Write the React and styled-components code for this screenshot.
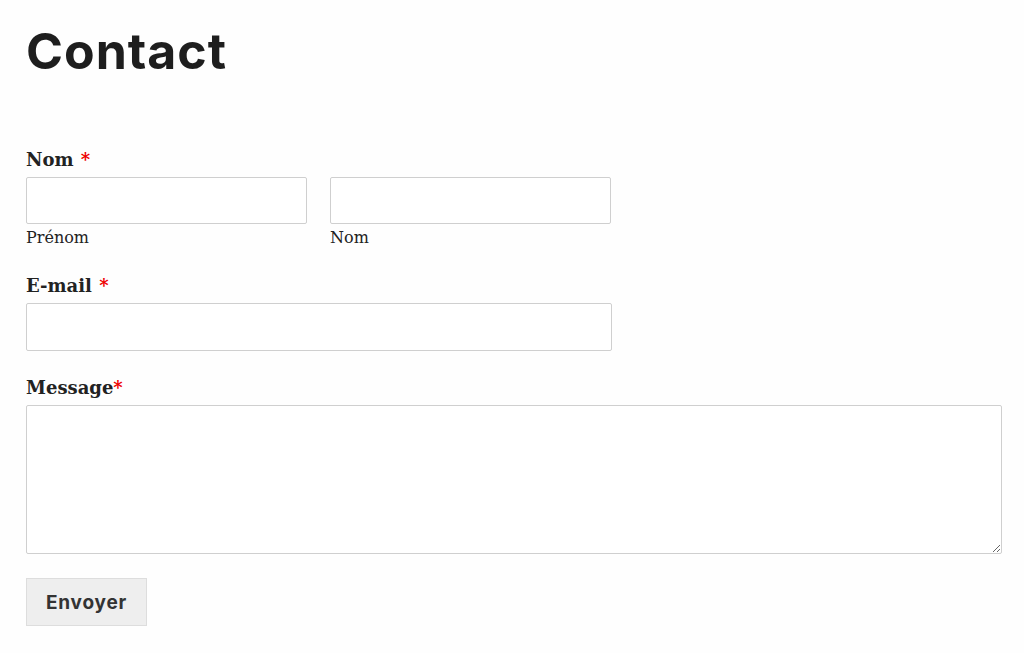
import React from 'react';
import styled, { createGlobalStyle } from 'styled-components';

const GlobalStyle = createGlobalStyle`
  body {
    margin: 0;
    background: #fefefe;
    color: #1e1e1e;
    font-family: "DejaVu Serif", serif;
  }
`;

const Page = styled.div`
  padding: 22px 22px 0 26px;
  width: 976px;
`;

const Title = styled.h1`
  margin: 0 0 67px;
  font-family: Inter, "Liberation Sans", sans-serif;
  font-weight: 700;
  font-size: 50px;
  line-height: 58px;
  letter-spacing: 1px;
  color: #1e1e1e;
`;

const Form = styled.form`
  display: flex;
  flex-direction: column;
`;

const Field = styled.div`
  display: flex;
  flex-direction: column;
  margin-bottom: ${p => p.$gap || 24}px;
`;

const Label = styled.label`
  font-family: "DejaVu Serif", serif;
  font-weight: 700;
  font-size: 18px;
  line-height: 26px;
  margin-bottom: 4px;
  color: #222;
`;

const Star = styled.span`
  color: #ee0000;
  margin-left: ${p => (p.$tight ? 0 : 1)}px;
`;

const Row = styled.div`
  display: flex;
  gap: 23px;
`;

const Part = styled.div`
  display: flex;
  flex-direction: column;
  width: 281px;
`;

const Input = styled.input`
  box-sizing: border-box;
  height: ${p => p.$h || 47}px;
  width: ${p => p.$w || 281}px;
  border: 1px solid #cfcfcf;
  border-radius: 2px;
  background: #fff;
  padding: 0 10px;
  font-size: 16px;
`;

const SubLabel = styled.span`
  font-family: "DejaVu Serif", serif;
  font-size: 16px;
  line-height: 24px;
  margin-top: 2px;
  color: #222;
`;

const TextArea = styled.textarea`
  box-sizing: border-box;
  width: 976px;
  height: 149px;
  border: 1px solid #cfcfcf;
  border-radius: 2px;
  background: #fff;
  padding: 10px;
  font-size: 16px;
  resize: vertical;
`;

const Button = styled.button`
  align-self: flex-start;
  box-sizing: border-box;
  width: 121px;
  height: 48px;
  background: #eeeeee;
  border: 1px solid #dddddd;
  border-radius: 0;
  font-family: Inter, "Liberation Sans", sans-serif;
  font-weight: 700;
  font-size: 19px;
  letter-spacing: 0.8px;
  color: #333;
  cursor: pointer;
`;

export default function App() {
  return (
    <>
      <GlobalStyle />
      <Page>
        <Title>Contact</Title>
        <Form onSubmit={e => e.preventDefault()}>
          <Field $gap={23}>
            <Label>Nom <Star>*</Star></Label>
            <Row>
              <Part>
                <Input />
                <SubLabel>Prénom</SubLabel>
              </Part>
              <Part>
                <Input />
                <SubLabel>Nom</SubLabel>
              </Part>
            </Row>
          </Field>
          <Field $gap={24}>
            <Label>E-mail <Star>*</Star></Label>
            <Input $w={586} $h={48} />
          </Field>
          <Field $gap={24}>
            <Label>Message<Star $tight>*</Star></Label>
            <TextArea />
          </Field>
          <Button type="submit">Envoyer</Button>
        </Form>
      </Page>
    </>
  );
}
